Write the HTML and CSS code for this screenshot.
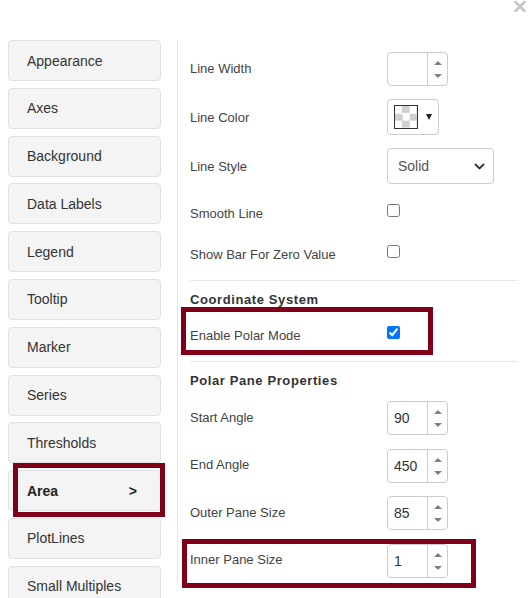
FILE: index.html
```html
<!DOCTYPE html>
<html lang="en">
<head>
<meta charset="utf-8">
<title>Chart Settings</title>
<link rel="stylesheet" href="styles.css">
</head>
<body>
<div class="dialog">
  <div class="topbar">
    <button class="close" aria-label="Close">
      <svg width="12" height="11" viewBox="0 0 12 11"><path d="M1.5 1 L10.5 10 M10.5 1 L1.5 10" stroke="#c4c4c4" stroke-width="2.6" stroke-linecap="square"/></svg>
    </button>
  </div>
  <div class="main">
    <nav class="nav">
      <div class="nav-item">Appearance</div>
      <div class="nav-item">Axes</div>
      <div class="nav-item">Background</div>
      <div class="nav-item">Data Labels</div>
      <div class="nav-item">Legend</div>
      <div class="nav-item">Tooltip</div>
      <div class="nav-item">Marker</div>
      <div class="nav-item">Series</div>
      <div class="nav-item">Thresholds</div>
      <div class="nav-item active"><span>Area</span><span class="chev">&gt;</span></div>
      <div class="nav-item">PlotLines</div>
      <div class="nav-item">Small Multiples</div>
    </nav>
    <section class="panel">
      <div class="field spin-row">
        <span class="label">Line Width</span>
        <div class="spin"><span class="val"></span><span class="arrows"><i class="up"></i><i class="down"></i></span></div>
      </div>
      <div class="field">
        <span class="label">Line Color</span>
        <div class="colorpick"><span class="swatch"></span><span class="tri"></span></div>
      </div>
      <div class="field select-row">
        <span class="label">Line Style</span>
        <div class="select"><span>Solid</span>
          <svg width="11" height="7" viewBox="0 0 11 7"><path d="M1 1 L5.5 5.5 L10 1" fill="none" stroke="#333" stroke-width="1.8"/></svg>
        </div>
      </div>
      <div class="field check">
        <span class="label">Smooth Line</span>
        <input type="checkbox" class="cb">
      </div>
      <div class="field check">
        <span class="label">Show Bar For Zero Value</span>
        <input type="checkbox" class="cb">
      </div>
      <div class="sep"></div>
      <div class="heading">Coordinate System</div>
      <div class="field check hl hl-polar">
        <span class="label">Enable Polar Mode</span>
        <input type="checkbox" class="cb" checked>
      </div>
      <div class="sep"></div>
      <div class="heading">Polar Pane Properties</div>
      <div class="field spin-row">
        <span class="label">Start Angle</span>
        <div class="spin"><span class="val">90</span><span class="arrows"><i class="up"></i><i class="down"></i></span></div>
      </div>
      <div class="field spin-row">
        <span class="label">End Angle</span>
        <div class="spin"><span class="val">450</span><span class="arrows"><i class="up"></i><i class="down"></i></span></div>
      </div>
      <div class="field spin-row">
        <span class="label">Outer Pane Size</span>
        <div class="spin"><span class="val">85</span><span class="arrows"><i class="up"></i><i class="down"></i></span></div>
      </div>
      <div class="field spin-row hl hl-inner">
        <span class="label">Inner Pane Size</span>
        <div class="spin"><span class="val">1</span><span class="arrows"><i class="up"></i><i class="down"></i></span></div>
      </div>
    </section>
  </div>
</div>
</body>
</html>
```
FILE: styles.css
```css
*, *::before, *::after { box-sizing: border-box; }
html, body { margin: 0; padding: 0; }
body {
  font-family: "Liberation Sans", Arial, sans-serif;
  background: #fff;
  width: 528px;
  height: 598px;
  overflow: hidden;
}
.dialog { width: 528px; height: 598px; overflow: hidden; }

.topbar {
  height: 40px;
  display: flex;
  justify-content: flex-end;
  align-items: flex-start;
  padding: 1px 2px 0 0;
}
.close {
  border: 0;
  background: none;
  padding: 0;
  width: 12px;
  height: 11px;
  display: block;
}
.close svg { display: block; }

.main { display: flex; align-items: flex-start; }

.nav {
  width: 161px;
  flex-shrink: 0;
  padding-left: 8px;
  display: flex;
  flex-direction: column;
  gap: 6.8px;
}
.nav-item {
  height: 41px;
  flex-shrink: 0;
  border: 1px solid #e1e1e1;
  border-radius: 4px;
  background: #f4f4f4;
  display: flex;
  align-items: center;
  justify-content: space-between;
  padding: 0 23px 0 18px;
  font-size: 14px;
  color: #333;
  position: relative;
}
.nav-item.active { font-weight: bold; color: #222; }
.nav-item.active::after {
  content: "";
  position: absolute;
  left: 4px;
  top: -8px;
  width: 152px;
  height: 54px;
  border: 5px solid #7f0018;
  z-index: 2;
}

.panel {
  margin-left: 16px;
  width: 351px;
  height: 541px;
  border-left: 1px solid #e8e8e8;
  padding: 0 10px 0 12px;
}

.field {
  display: flex;
  align-items: center;
  margin-top: 13px;
  position: relative;
}
.panel > .field:first-child { margin-top: 12px; }
.label {
  width: 197px;
  flex-shrink: 0;
  font-size: 13px;
  color: #444;
}
.spin-row .label { margin-bottom: 2px; }
.field.check { height: 30px; margin-top: 11px; }
.select-row + .check { margin-top: 14px; }
.heading + .field { margin-top: 10px; }
.spin-row + .spin-row { margin-top: 13.5px; }

.sep { height: 1px; background: #e8e8e8; margin-top: 11px; }
.heading {
  margin-top: 9px;
  height: 20px;
  line-height: 20px;
  font-size: 13px;
  font-weight: bold;
  letter-spacing: 0.6px;
  color: #333;
}

/* spinner */
.spin {
  width: 61px;
  height: 34px;
  border: 1px solid #ccc;
  border-radius: 4px;
  display: flex;
  background: #fff;
}
.spin .val {
  width: 40px;
  border-right: 1px solid #ccc;
  font-size: 14px;
  color: #333;
  padding-left: 6px;
  display: flex;
  align-items: center;
}
.spin .arrows {
  flex: 1;
  display: flex;
  flex-direction: column;
  align-items: center;
  justify-content: space-between;
  padding: 8px 0 7px;
}
.spin .up, .spin .down {
  display: block;
  width: 0;
  height: 0;
  border-left: 4px solid transparent;
  border-right: 4px solid transparent;
}
.spin .up { border-bottom: 4px solid #808080; }
.spin .down { border-top: 4px solid #808080; }

/* colour picker */
.colorpick {
  width: 52px;
  height: 36px;
  border: 1px solid #ccc;
  border-radius: 4px;
  display: flex;
  align-items: center;
  padding-left: 6px;
  gap: 8px;
}
.swatch {
  width: 24px;
  height: 24px;
  border: 1px solid #333;
  background-color: #fff;
  background-image: conic-gradient(#d0d0d0 25%, #fff 25% 50%, #d0d0d0 50% 75%, #fff 75%);
  background-size: 14.7px 14.7px;
  background-position: 0 0;
}
.tri {
  width: 0;
  height: 0;
  border-left: 3.5px solid transparent;
  border-right: 3.5px solid transparent;
  border-top: 6px solid #222;
}

/* select */
.select {
  width: 107px;
  height: 36px;
  border: 1px solid #ccc;
  border-radius: 4px;
  display: flex;
  align-items: center;
  justify-content: space-between;
  padding: 0 8px 0 10px;
  font-size: 14px;
  color: #555;
}
.select svg { display: block; }

/* checkbox */
.cb {
  width: 13px;
  height: 13px;
  margin: 0 0 6px 0;
}

/* annotation boxes */
.hl::after {
  content: "";
  position: absolute;
  border: 5px solid #7f0018;
  pointer-events: none;
}
.hl-polar::after { left: -9px; top: -13px; width: 252px; height: 48px; }
.hl-inner::after { left: -8px; top: -4.5px; width: 294px; height: 49px; }
```
